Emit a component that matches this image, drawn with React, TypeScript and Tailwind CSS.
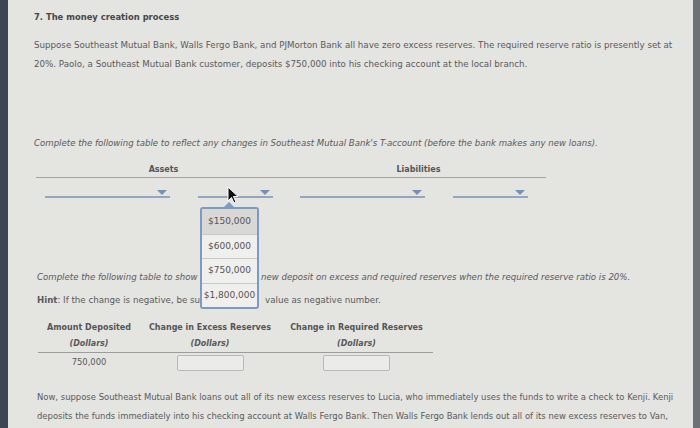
import React from 'react';

const font = { fontFamily: '"DejaVu Sans", Verdana, sans-serif' };

function Select({ width, open }: { width: string; open?: boolean }) {
  return (
    <div className={`relative h-[20px] ${width}`}>
      <div className="absolute bottom-0 left-0 right-0 h-[2px] bg-[#93a8bf]" />
      <div className="absolute right-[3px] bottom-[3px] w-0 h-0 border-l-[5px] border-r-[5px] border-t-[5px] border-l-transparent border-r-transparent border-t-[#6f93ba]" />
      {open && <DropdownMenu />}
    </div>
  );
}

function DropdownMenu() {
  const items = ['$150,000', '$600,000', '$750,000', '$1,800,000'];
  return (
    <>
      <svg className="absolute left-[29px] top-[8px] z-20" width="12" height="20" viewBox="0 0 12 20">
        <path d="M1 1 L1 15 L4.5 11.5 L7 17 L9 16 L6.5 10.5 L11 10.5 Z" fill="#111" stroke="#fff" strokeWidth="1" />
      </svg>
      <div className="absolute left-[26px] top-[24px] w-0 h-0 border-l-[5px] border-r-[5px] border-b-[5px] border-l-transparent border-r-transparent border-b-[#7a9cc4] z-10" />
      <div className="absolute left-[2px] top-[29px] w-[59px] z-10 border-2 border-[#7a9cc4] rounded-[3px] bg-[#efefed] overflow-hidden">
        {items.map((it, i) => (
          <div
            key={it}
            className={`h-[24.5px] flex items-center justify-center text-[9px] text-[#555] ${i > 0 ? 'border-t border-[#c9c9c7]' : ''} ${i === 0 ? 'bg-[#d8d8d6]' : ''}`}
          >
            {it}
          </div>
        ))}
      </div>
    </>
  );
}

export default function App() {
  return (
    <div className="w-[700px] h-[428px] overflow-hidden flex bg-[#e4e4e1]" style={font}>
      <div className="w-[8px] shrink-0 bg-[#3c4551]" />
      <div className="flex-1 pl-[26px] pr-[12px] text-[8.7px] leading-[19px] text-[#5a5a5a] whitespace-nowrap">
        <h1 className="pt-[8px] font-bold text-[8.4px] text-[#474747]">7. The money creation process</h1>

        <p className="mt-[9px]">
          Suppose Southeast Mutual Bank, Walls Fergo Bank, and PJMorton Bank all have zero excess reserves. The required reserve ratio is presently set at
          <br />
          20%. Paolo, a Southeast Mutual Bank customer, deposits $750,000 into his checking account at the local branch.
        </p>

        {/* T-account */}
        <p className="mt-[60px] italic text-[8.6px]">
          Complete the following table to reflect any changes in Southeast Mutual Bank's T-account (before the bank makes any new loans).
        </p>
        <div className="mt-[7px] ml-[2px] w-[510px]">
          <div className="grid grid-cols-2 border-b border-[#a3a3a1] h-[18px] items-center font-bold text-[8px] text-[#555]">
            <div className="text-center">Assets</div>
            <div className="text-center">Liabilities</div>
          </div>
          <div className="grid grid-cols-2">
            <div className="flex pl-[9px] gap-[28px]">
              <Select width="w-[125px]" />
              <Select width="w-[75px]" open />
            </div>
            <div className="flex pl-[9px] gap-[28px]">
              <Select width="w-[125px]" />
              <Select width="w-[75px]" />
            </div>
          </div>
        </div>

        <div className="mt-[70px] ml-[3px] italic text-[8.6px] flex">
          <span className="w-[221px] overflow-hidden">Complete the following table to show the effect of this</span>
          <span className="pl-[3px]">new deposit on excess and required reserves when the required reserve ratio is 20%.</span>
        </div>
        <div className="mt-[4px] ml-[3px] flex">
          <span className="w-[221px] overflow-hidden">
            <span className="font-bold text-[8.6px]">Hint</span>: If the change is negative, be sure to enter the
          </span>
          <span className="pl-[7px]">value as negative number.</span>
        </div>

        <table className="mt-[10px] ml-[4px] border-collapse">
          <thead>
            <tr className="font-bold text-[8px] text-[#555] leading-[16px]">
              <th className="w-[102px] text-center font-bold">Amount Deposited</th>
              <th className="w-[140px] text-center font-bold">Change in Excess Reserves</th>
              <th className="w-[153px] text-center font-bold">Change in Required Reserves</th>
            </tr>
            <tr className="italic text-[8px] leading-[16px] border-b-[1.5px] border-[#9c9c9a]">
              <th className="text-center font-bold">(Dollars)</th>
              <th className="text-center font-bold">(Dollars)</th>
              <th className="text-center font-bold">(Dollars)</th>
            </tr>
          </thead>
          <tbody>
            <tr className="h-[19px]">
              <td className="text-center text-[8.4px]">750,000</td>
              <td>
                <div className="mx-auto w-[67px] h-[16px] border border-[#b8b8b6] rounded-[2px] bg-[#ebebe9]" />
              </td>
              <td>
                <div className="mx-auto w-[67px] h-[16px] border border-[#b8b8b6] rounded-[2px] bg-[#ebebe9]" />
              </td>
            </tr>
          </tbody>
        </table>

        <p className="mt-[16px] ml-[3px] text-[8.45px]">
          Now, suppose Southeast Mutual Bank loans out all of its new excess reserves to Lucia, who immediately uses the funds to write a check to Kenji. Kenji
          <br />
          deposits the funds immediately into his checking account at Walls Fergo Bank. Then Walls Fergo Bank lends out all of its new excess reserves to Van,
          <br />
          who writes a check to Sharon, who deposits the money into her account at PJMorton Bank. PJMorton lends out all of its new excess reserves
        </p>
      </div>
      <div className="w-[7px] shrink-0 bg-[#6e7173]" />
    </div>
  );
}
